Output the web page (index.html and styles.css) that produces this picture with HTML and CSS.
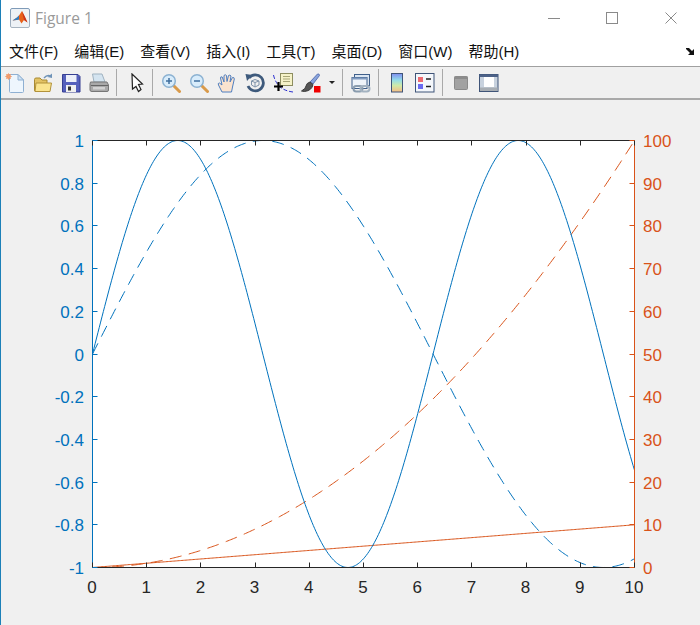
FILE: index.html
```html
<!DOCTYPE html>
<html lang="zh">
<head>
    <meta charset="UTF-8">
    <meta name="viewport" content="width=device-width, initial-scale=1.0">
    <title>Figure 1</title>
    <link rel="stylesheet" href="styles.css">
</head>
<body>
    <div class="window">
        <div class="titlebar">
            <svg class="app-icon" width="20" height="20" viewBox="0 0 20 20">
                <defs>
                    <linearGradient id="frame" x1="0" y1="0" x2="0" y2="1">
                        <stop offset="0" stop-color="#7f9bb8"/>
                        <stop offset="1" stop-color="#a8b4c0"/>
                    </linearGradient>
                </defs>
                <rect x="0.5" y="0.5" width="19" height="19" rx="1.5" fill="#eef2f6" stroke="url(#frame)"/>
                <path d="M2.5 12.5 L7 9.5 L9 7.5 L12 3 L15 9 L17.5 14.5 L14 12 L11.5 15.5 L9 11.5 L6.5 12 Z" fill="#e8621a"/>
                <path d="M2.5 12.5 L7 9.5 L9 7.5 L9 11.5 L6.5 12 Z" fill="#2f7fc4"/>
                <path d="M12 3 L15 9 L17.5 14.5 L14 12 Z" fill="#c9341c"/>
            </svg>
            <span class="title">Figure 1</span>
            <div class="window-buttons">
                <span class="win-min"></span>
                <span class="win-max"></span>
                <svg class="win-close" width="12" height="12" viewBox="0 0 12 12">
                    <path d="M0.5 0.5 L11.5 11.5 M11.5 0.5 L0.5 11.5" stroke="#8a8a8a" fill="none"/>
                </svg>
            </div>
        </div>

        <div class="menubar">
            <span class="menu-item">文件(F)</span>
            <span class="menu-item">编辑(E)</span>
            <span class="menu-item">查看(V)</span>
            <span class="menu-item">插入(I)</span>
            <span class="menu-item">工具(T)</span>
            <span class="menu-item">桌面(D)</span>
            <span class="menu-item">窗口(W)</span>
            <span class="menu-item">帮助(H)</span>
            <svg class="dock-arrow" width="9" height="8" viewBox="0 0 9 8">
                <path d="M0 1 H3 L6 4 L8 2 V8 H2 L4 6 L0 2 Z" fill="#111"/>
            </svg>
        </div>

        <div class="toolbar">
            <div class="tool-group">
                <!-- new -->
                <svg class="tool" viewBox="0 0 20 20">
                    <path d="M4.5 1.5 H13 L18.5 7 V18.5 Q18.5 19.5 17.5 19.5 H5.5 Q4.5 19.5 4.5 18.5 Z" fill="#eef6fd" stroke="#8fb0d2"/>
                    <path d="M13 1.5 V7 H18.5 Z" fill="#cfe2f4" stroke="#8fb0d2"/>
                    <circle cx="3.5" cy="3.5" r="2.4" fill="#f08a5a"/>
                    <path d="M3.5 0 V7 M0 3.5 H7 M1 1 L6 6 M6 1 L1 6" stroke="#f0a070" stroke-width="0.7"/>
                </svg>
                <!-- open -->
                <svg class="tool" viewBox="0 0 20 20">
                    <path d="M1.5 6.5 Q1.5 5 3 5 H7 L9 7 H14 V18.5 H3 Q1.5 18.5 1.5 17 Z" fill="#e2c264" stroke="#a98a33"/>
                    <path d="M3 10 H18.5 L17 18.5 H2 Z" fill="#fae48e" stroke="#b2923a"/>
                    <path d="M11 5 Q14 1.5 17.5 3" fill="none" stroke="#6f93b8" stroke-width="1.4"/>
                    <path d="M19 0.5 L19 5 L14.5 4 Z" fill="#6f93b8"/>
                </svg>
                <!-- save -->
                <svg class="tool" viewBox="0 0 20 20">
                    <path d="M1.5 1.5 H17 L19 3.5 V19 H1.5 Z" fill="#5560bc" stroke="#363f92"/>
                    <rect x="5" y="2" width="10.5" height="7" fill="#eceff9"/>
                    <rect x="5" y="12" width="10" height="7" fill="#f0f0f0"/>
                    <rect x="7" y="13.5" width="3" height="4" fill="#333"/>
                </svg>
                <!-- print -->
                <svg class="tool" viewBox="0 0 20 20">
                    <path d="M5 9 L3.5 1 H13 L16 9 Z" fill="#d4e4f0" stroke="#9fb2c0"/>
                    <path d="M1.5 9 H18 L19.5 12 V17 Q19.5 18.5 18 18.5 H3 Q1 18.5 1 17 V11 Z" fill="#a9a9a9" stroke="#777"/>
                    <path d="M2 12.5 H19" stroke="#666"/>
                    <rect x="4" y="14" width="12" height="2.5" fill="#d2d2d2"/>
                </svg>
            </div>
            <div class="tool-group">
                <!-- pointer -->
                <svg class="tool" viewBox="0 0 20 20">
                    <path d="M7 1 L17.5 11 L13.5 11.5 L16 16.5 L13.5 18.5 L11 13.5 L7.5 16 Z" fill="#fff" stroke="#222" stroke-width="1.2"/>
                </svg>
            </div>
            <div class="tool-group">
                <!-- zoom in -->
                <svg class="tool" viewBox="0 0 20 20">
                    <path d="M12.5 12.5 L18.5 18.5" stroke="#d99a4a" stroke-width="3" stroke-linecap="round"/>
                    <circle cx="8" cy="8" r="6.3" fill="#d8ecfb" stroke="#8cb2d2" stroke-width="1.5"/>
                    <path d="M5 8 H11 M8 5 V11" stroke="#3f6f9f" stroke-width="1.5"/>
                </svg>
                <!-- zoom out -->
                <svg class="tool" viewBox="0 0 20 20">
                    <path d="M12.5 12.5 L18.5 18.5" stroke="#d99a4a" stroke-width="3" stroke-linecap="round"/>
                    <circle cx="8" cy="8" r="6.3" fill="#d8ecfb" stroke="#8cb2d2" stroke-width="1.5"/>
                    <path d="M5 8 H11" stroke="#3f6f9f" stroke-width="1.5"/>
                </svg>
                <!-- pan -->
                <svg class="tool" viewBox="0 0 20 20">
                    <path d="M5 19 L1.5 12 Q0.5 10 2.5 10 L5 12 L3.5 5 Q3.5 3.2 5.2 4 L7 9 L7 2.5 Q8.2 1 9.5 2.5 L10 8.5 L11.5 2.5 Q13 1.5 14 3 L13 9 L15.5 4.5 Q17.3 4 17.3 6 L15.5 14 Q15 16.5 14.5 19 Z" fill="#fbe3cf" stroke="#4f7fc0"/>
                </svg>
                <!-- rotate -->
                <svg class="tool" viewBox="0 0 20 20">
                    <path d="M4 5 A8 8 0 1 1 3 13" fill="none" stroke="#3e5a7c" stroke-width="2.8"/>
                    <path d="M0.5 1 L7.5 2 L2 8 Z" fill="#3e5a7c"/>
                    <path d="M6.5 8 L10 6.5 L14 8 V12 L10 14 L6.5 12 Z M10 9.5 V14 M6.5 8 L10 9.5 L14 8" fill="none" stroke="#7e93aa"/>
                </svg>
                <!-- data cursor -->
                <svg class="tool" viewBox="0 0 20 20">
                    <path d="M0.5 2 Q2 9 7 14 Q12 18 20 19" fill="none" stroke="#2b2fd0" stroke-dasharray="4 2"/>
                    <rect x="7.5" y="0.5" width="12" height="12" fill="#f5f2c8" stroke="#8d8d60"/>
                    <path d="M10 3.5 H17 M10 6 H17 M10 8.5 H17" stroke="#a8a678"/>
                    <path d="M5.5 9 V18 M1 13.5 H10" stroke="#000" stroke-width="2.2"/>
                </svg>
                <!-- brush -->
                <svg class="tool" viewBox="0 0 20 20">
                    <path d="M9 9 L16.5 1 Q18.5 0.5 18.5 2.5 L12 11 Z" fill="#8aa4dc" stroke="#5a74b4"/>
                    <path d="M9 9 L12 11.5 Q11 17.5 3.5 18.5 L0.5 18 Q5 15.5 5 13 Q5.5 10 9 9 Z" fill="#555" stroke="#3a3a3a"/>
                    <rect x="13" y="13" width="6.5" height="6.5" fill="#f00000"/>
                </svg>
                <svg class="tool-arrow" width="6" height="3" viewBox="0 0 6 3">
                    <path d="M0 0 H6 L3 3 Z" fill="#222"/>
                </svg>
            </div>
            <div class="tool-group">
                <!-- link -->
                <svg class="tool" viewBox="0 0 20 20">
                    <rect x="3.5" y="1.5" width="15" height="11" fill="#dbe6f2" stroke="#3f5f8a"/>
                    <rect x="1" y="4.5" width="15" height="11" fill="#eef3f9" stroke="#3f5f8a"/>
                    <rect x="1" y="4.5" width="15" height="2" fill="#7f9ac0"/>
                    <rect x="2.5" y="13" width="9" height="5.5" rx="2.7" fill="none" stroke="#8a9cae" stroke-width="2"/>
                    <rect x="9.5" y="13" width="9" height="5.5" rx="2.7" fill="none" stroke="#a3b2c0" stroke-width="2"/>
                </svg>
            </div>
            <div class="tool-group">
                <!-- colorbar -->
                <svg class="tool" viewBox="0 0 20 20">
                    <defs>
                        <linearGradient id="cbar" x1="0" y1="0" x2="0" y2="1">
                            <stop offset="0" stop-color="#7f8cf0"/>
                            <stop offset="0.35" stop-color="#92dcea"/>
                            <stop offset="0.65" stop-color="#cfeaa8"/>
                            <stop offset="1" stop-color="#f6bc84"/>
                        </linearGradient>
                    </defs>
                    <rect x="4.5" y="0.5" width="11" height="18.5" fill="url(#cbar)" stroke="#3f5478"/>
                </svg>
                <!-- legend -->
                <svg class="tool" viewBox="0 0 20 20">
                    <rect x="0.5" y="0.5" width="18.5" height="18.5" fill="#f4f7fb" stroke="#3f5478"/>
                    <rect x="3" y="4" width="5" height="5" fill="#ee6a70"/>
                    <rect x="3" y="11" width="5" height="5" fill="#6a6af0"/>
                    <path d="M11 6 H16 M11 13.5 H16" stroke="#222" stroke-width="1.5"/>
                </svg>
            </div>
            <div class="tool-group">
                <!-- hide plot tools -->
                <svg class="tool" viewBox="0 0 20 20">
                    <rect x="3.5" y="3.5" width="13" height="13" rx="1" fill="#a2a2a2" stroke="#8a8a8a"/>
                    <rect x="3.5" y="3.5" width="13" height="2.5" fill="#8c8c8c"/>
                </svg>
                <!-- show plot tools -->
                <svg class="tool" viewBox="0 0 20 20">
                    <rect x="0.5" y="1.5" width="18.5" height="17" fill="#c8d2de" stroke="#3f5478"/>
                    <rect x="0.5" y="1.5" width="18.5" height="2.5" fill="#4d6288"/>
                    <rect x="5" y="4" width="10" height="10" fill="#fff"/>
                    <rect x="1" y="14.5" width="17.5" height="3.5" fill="#a8aeb4"/>
                </svg>
            </div>
        </div>

        <div class="figure">
            <svg id="plot" class="plot" width="699" height="525" viewBox="1 100 699 525"></svg>
        </div>
    </div>

    <script src="plot.js"></script>
</body>
</html>
```

FILE: styles.css
```css
* {
    box-sizing: border-box;
}
html, body {
    margin: 0;
    padding: 0;
}
body {
    width: 700px;
    height: 625px;
    overflow: hidden;
    background: #fff;
}
.window {
    display: flex;
    flex-direction: column;
    height: 625px;
    border-left: 1px solid #1c80b8;
}
.titlebar {
    display: flex;
    align-items: center;
    height: 37px;
    padding: 0 0 1px 9px;
}
.title {
    margin-left: 5px;
    font-family: "Open Sans", "Noto Sans", sans-serif;
    font-size: 15.5px;
    color: #9a9a9a;
}
.window-buttons {
    display: flex;
    align-items: center;
    margin-left: auto;
}
.win-min {
    width: 12px;
    height: 1px;
    margin-right: 46px;
    background: #8a8a8a;
}
.win-max {
    width: 12px;
    height: 12px;
    margin-right: 47px;
    border: 1px solid #8a8a8a;
}
.win-close {
    margin-right: 23px;
}
.menubar {
    display: flex;
    align-items: center;
    gap: 16px;
    height: 30px;
    padding: 0 0 2px 8px;
    border-bottom: 1px solid #a0a0a0;
    font-family: "Liberation Sans", "Noto Sans CJK SC", sans-serif;
    font-size: 15px;
    color: #111;
}
.dock-arrow {
    margin-left: auto;
    margin-right: 5px;
}
.toolbar {
    display: flex;
    align-items: center;
    height: 33px;
    background: #f0f0f0;
    border-bottom: 2px solid #a9a9a9;
}
.tool-group {
    display: flex;
    align-items: center;
    gap: 8px;
    height: 27px;
    padding: 0 7px 0 8px;
    border-left: 1px solid #a9a9a9;
}
.tool-group:first-child {
    padding-left: 4px;
    border-left: none;
}
.tool {
    width: 20px;
    height: 20px;
}
.figure {
    flex: 1;
    background: #f0f0f0;
}
.plot {
    display: block;
}
.plot text {
    font-family: "Liberation Sans", sans-serif;
    font-size: 17px;
}
```

FILE: plot.js
```js
// axes box in page pixels
var box = { left: 92.5, right: 634.5, top: 140.5, bottom: 567.5 };
var BLUE = '#0072bd', ORANGE = '#d95319', DARK = '#262626';
var svg = document.getElementById('plot');

function px(x) {
    return box.left + x / 10 * (box.right - box.left);
}
function pyLeft(y) {
    return box.bottom - (y + 1) / 2 * (box.bottom - box.top);
}
function pyRight(y) {
    return box.bottom - y / 100 * (box.bottom - box.top);
}

function add(name, attrs, content) {
    var el = document.createElementNS('http://www.w3.org/2000/svg', name);
    for (var k in attrs) el.setAttribute(k, attrs[k]);
    if (content !== undefined) el.textContent = content;
    svg.appendChild(el);
}

function line(x1, y1, x2, y2, color) {
    add('line', { x1: x1, y1: y1, x2: x2, y2: y2, stroke: color, 'stroke-width': 1 });
}

function curve(fn, toY, color, dash) {
    var pts = [];
    for (var i = 0; i <= 400; i++) {
        var x = i / 40;
        pts.push(px(x).toFixed(2) + ',' + toY(fn(x)).toFixed(2));
    }
    var attrs = { points: pts.join(' '), fill: 'none', stroke: color, 'stroke-width': 1 };
    if (dash) attrs['stroke-dasharray'] = dash;
    add('polyline', attrs);
}

add('rect', {
    x: box.left, y: box.top,
    width: box.right - box.left, height: box.bottom - box.top,
    fill: '#fff'
});

curve(function (x) { return x; }, pyRight, ORANGE);
curve(function (x) { return x * x; }, pyRight, ORANGE, '12 7.5');
curve(Math.sin, pyLeft, BLUE);
curve(function (x) { return Math.sin(x / 2); }, pyLeft, BLUE, '12 7.5');

// box and ticks
line(box.left, box.top, box.right, box.top, DARK);
line(box.left, box.bottom, box.right, box.bottom, DARK);
line(box.left, box.top, box.left, box.bottom, BLUE);
line(box.right, box.top, box.right, box.bottom, ORANGE);

for (var i = 0; i <= 10; i++) {
    var x = Math.round(px(i) - 0.5) + 0.5;
    line(x, box.bottom, x, box.bottom - 5, DARK);
    line(x, box.top, x, box.top + 5, DARK);
    add('text', { x: px(i) - 0.5, y: 593, 'text-anchor': 'middle', fill: DARK }, String(i));

    var yr = Math.round(pyRight(i * 10) - 0.5) + 0.5;
    line(box.right, yr, box.right - 5, yr, ORANGE);
    add('text', { x: 643, y: pyRight(i * 10) + 6.5, fill: ORANGE }, String(i * 10));

    var v = -1 + i * 0.2;
    line(box.left, yr, box.left + 5, yr, BLUE);
    var label = i === 0 ? '-1' : i === 10 ? '1' : i === 5 ? '0' : v.toFixed(1);
    add('text', { x: 84, y: pyRight(i * 10) + 6.5, 'text-anchor': 'end', fill: BLUE }, label);
}
```
